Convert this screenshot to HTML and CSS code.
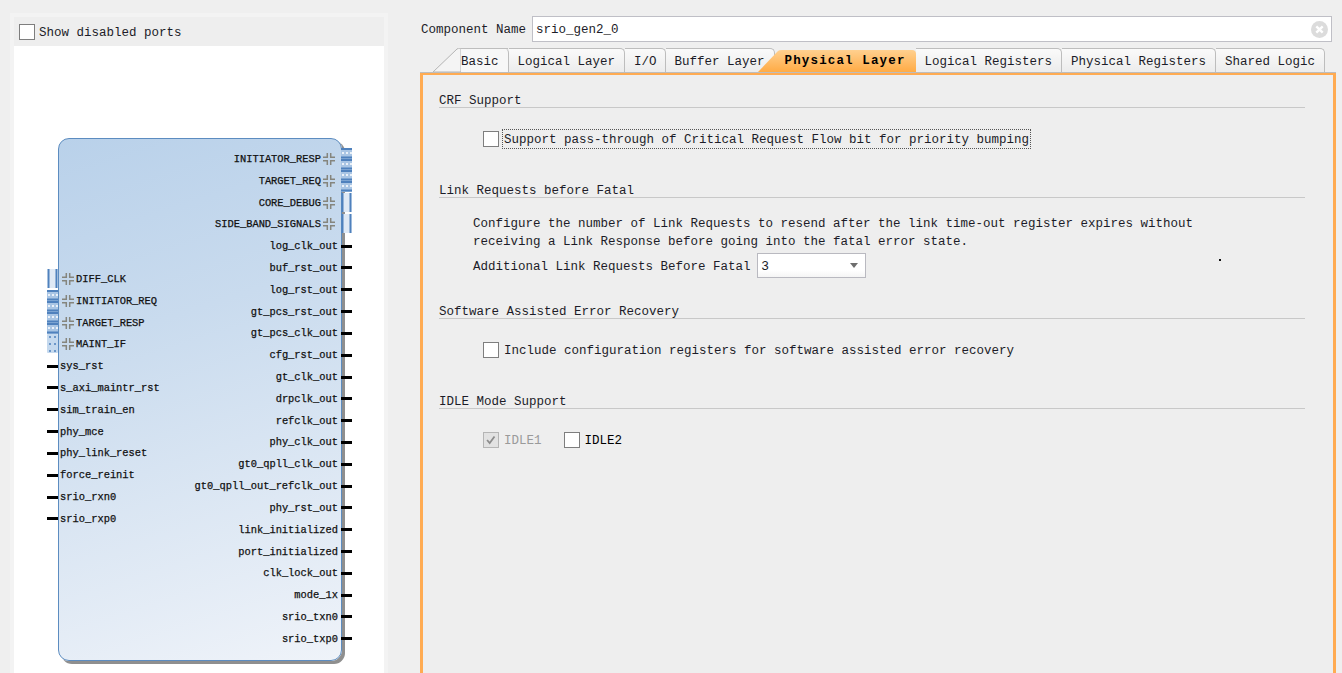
FILE: index.html
```html
<!DOCTYPE html>
<html lang="en">
<head>
<meta charset="utf-8">
<title>srio_gen2_0</title>
<link rel="stylesheet" href="styles.css">
</head>
<body>
<svg class="defs" width="0" height="0" aria-hidden="true">
  <defs>
    <symbol id="cross" viewBox="0 0 12 12">
      <path d="M4.300 0v4.300H0M7.700 0v4.300H12M4.300 12V7.700H0M7.700 12V7.700H12" fill="none" stroke="#85857d" stroke-width="1.500"/>
    </symbol>
    <symbol id="bus-h" viewBox="0 0 11 22">
      <rect width="11" height="22" fill="#a9c5e4"/>
      <path d="M0 1h11M0 9.500h11M0 12h11M0 20.500h11" stroke="#4f81bd" stroke-width="2"/>
      <path d="M1 5h2M5 5h2M9 5h2M1 16h2M5 16h2M9 16h2" stroke="#fff" stroke-width="1.400"/>
    </symbol>
    <symbol id="bus-v" viewBox="0 0 11 22">
      <rect x="1" y="1" width="9.500" height="19" fill="#dfe9f5"/>
      <path d="M1.500 1v19M9.500 1v19" stroke="#4f81bd" stroke-width="2"/>
    </symbol>
    <symbol id="bus-l" viewBox="0 0 11 22">
      <rect y="1" width="11" height="19" rx="1" fill="#c5d9ee"/>
      <path d="M2 4h2M7 4h2M2 11h2M7 11h2M2 18h2M7 18h2" stroke="#4f81bd" stroke-width="1.600"/>
    </symbol>
  </defs>
</svg>
<div class="app">
  <aside class="preview">
    <label class="preview-head"><span class="check"></span><span class="label-text">Show disabled ports</span></label>
    <div class="canvas">
      <div class="symbol">
        <div class="pins pins-left">
          <div class="pin"><svg class="bus"><use href="#bus-v"/></svg><svg class="cross"><use href="#cross"/></svg><span>DIFF_CLK</span></div>
          <div class="pin"><svg class="bus"><use href="#bus-h"/></svg><svg class="cross"><use href="#cross"/></svg><span>INITIATOR_REQ</span></div>
          <div class="pin"><svg class="bus"><use href="#bus-h"/></svg><svg class="cross"><use href="#cross"/></svg><span>TARGET_RESP</span></div>
          <div class="pin"><svg class="bus"><use href="#bus-l"/></svg><svg class="cross"><use href="#cross"/></svg><span>MAINT_IF</span></div>
          <div class="pin"><i class="stub"></i><span>sys_rst</span></div>
          <div class="pin"><i class="stub"></i><span>s_axi_maintr_rst</span></div>
          <div class="pin"><i class="stub"></i><span>sim_train_en</span></div>
          <div class="pin"><i class="stub"></i><span>phy_mce</span></div>
          <div class="pin"><i class="stub"></i><span>phy_link_reset</span></div>
          <div class="pin"><i class="stub"></i><span>force_reinit</span></div>
          <div class="pin"><i class="stub"></i><span>srio_rxn0</span></div>
          <div class="pin"><i class="stub"></i><span>srio_rxp0</span></div>
        </div>
        <div class="pins pins-right">
          <div class="pin"><span>INITIATOR_RESP</span><svg class="cross"><use href="#cross"/></svg><svg class="bus"><use href="#bus-h"/></svg></div>
          <div class="pin"><span>TARGET_REQ</span><svg class="cross"><use href="#cross"/></svg><svg class="bus"><use href="#bus-h"/></svg></div>
          <div class="pin"><span>CORE_DEBUG</span><svg class="cross"><use href="#cross"/></svg><svg class="bus"><use href="#bus-v"/></svg></div>
          <div class="pin"><span>SIDE_BAND_SIGNALS</span><svg class="cross"><use href="#cross"/></svg><svg class="bus"><use href="#bus-v"/></svg></div>
          <div class="pin"><span>log_clk_out</span><i class="stub"></i></div>
          <div class="pin"><span>buf_rst_out</span><i class="stub"></i></div>
          <div class="pin"><span>log_rst_out</span><i class="stub"></i></div>
          <div class="pin"><span>gt_pcs_rst_out</span><i class="stub"></i></div>
          <div class="pin"><span>gt_pcs_clk_out</span><i class="stub"></i></div>
          <div class="pin"><span>cfg_rst_out</span><i class="stub"></i></div>
          <div class="pin"><span>gt_clk_out</span><i class="stub"></i></div>
          <div class="pin"><span>drpclk_out</span><i class="stub"></i></div>
          <div class="pin"><span>refclk_out</span><i class="stub"></i></div>
          <div class="pin"><span>phy_clk_out</span><i class="stub"></i></div>
          <div class="pin"><span>gt0_qpll_clk_out</span><i class="stub"></i></div>
          <div class="pin"><span>gt0_qpll_out_refclk_out</span><i class="stub"></i></div>
          <div class="pin"><span>phy_rst_out</span><i class="stub"></i></div>
          <div class="pin"><span>link_initialized</span><i class="stub"></i></div>
          <div class="pin"><span>port_initialized</span><i class="stub"></i></div>
          <div class="pin"><span>clk_lock_out</span><i class="stub"></i></div>
          <div class="pin"><span>mode_1x</span><i class="stub"></i></div>
          <div class="pin"><span>srio_txn0</span><i class="stub"></i></div>
          <div class="pin"><span>srio_txp0</span><i class="stub"></i></div>
        </div>
      </div>
    </div>
  </aside>
  <main class="config">
    <div class="name-row">
      <span class="label-text">Component Name</span>
      <div class="name-input">
        <span class="label-text">srio_gen2_0</span>
        <svg class="clear" viewBox="0 0 16 16"><circle cx="8" cy="8" r="8" fill="#dcdcdc"/><path d="M5 5l6 6M11 5l-6 6" stroke="#fff" stroke-width="2.200"/></svg>
      </div>
    </div>
    <nav class="tabs">
      <div class="tab tab-first">
        <svg class="slant" viewBox="0 0 28 24" preserveAspectRatio="none"><path d="M0 24L24 1Q25 0 28 0V24Z" fill="#f4f4f4" stroke="#b4b4b4"/></svg>
        <span>Basic</span>
      </div>
      <div class="tab">Logical Layer</div>
      <div class="tab tab-io">I/O</div>
      <div class="tab tab-before-active">Buffer Layer</div>
      <div class="tab tab-active">
        <svg class="slant" viewBox="0 0 28 22" preserveAspectRatio="none"><defs><linearGradient id="orange" x1="0" y1="0" x2="0" y2="1"><stop offset="0" stop-color="#ffd08f"/><stop offset="1" stop-color="#ffab45"/></linearGradient></defs><path d="M0 22L20 1Q21 0 24 0H28V22Z" fill="url(#orange)"/></svg>
        <span>Physical Layer</span>
      </div>
      <div class="tab">Logical Registers</div>
      <div class="tab">Physical Registers</div>
      <div class="tab">Shared Logic</div>
    </nav>
    <div class="panel">
      <section class="group group-crf">
        <h2 class="group-title">CRF Support</h2>
        <div class="opt-row">
          <label class="opt"><span class="check"></span><span class="label-text focus">Support pass-through of Critical Request Flow bit for priority bumping</span></label>
        </div>
      </section>
      <section class="group group-link">
        <h2 class="group-title">Link Requests before Fatal</h2>
        <div class="desc">
          <p class="desc-line">Configure the number of Link Requests to resend after the link time-out register expires without</p>
          <p class="desc-line desc-clip">receiving a Link Response before going into the fatal error state.</p>
          <div class="combo-row">
            <span class="combo-label">Additional Link Requests Before Fatal</span>
            <div class="combo"><span class="combo-val">3</span><i class="combo-arrow"></i></div>
          </div>
        </div>
      </section>
      <section class="group group-soft">
        <h2 class="group-title">Software Assisted Error Recovery</h2>
        <div class="opt-row">
          <label class="opt"><span class="check"></span><span class="label-text">Include configuration registers for software assisted error recovery</span></label>
        </div>
      </section>
      <section class="group group-idle">
        <h2 class="group-title">IDLE Mode Support</h2>
        <div class="opt-row">
          <label class="opt opt-disabled"><span class="check check-on"><svg viewBox="0 0 16 16"><path d="M3.500 8l3 3.500 5.500-7.500" fill="none" stroke="#8c8c8c" stroke-width="2"/></svg></span><span class="label-text">IDLE1</span></label>
          <label class="opt opt-second"><span class="check"></span><span class="label-text">IDLE2</span></label>
        </div>
      </section>
      <i class="speck"></i>
    </div>
  </main>
</div>
</body>
</html>
```
FILE: styles.css
```css
* { box-sizing: border-box; }
html, body { margin: 0; height: 673px; overflow: hidden; }
body {
  background: #efefef;
  color: #1c1c28;
  font: 12.5px/16px "Liberation Mono", "DejaVu Sans Mono", monospace;
}
.defs { position: absolute; }
.app { display: flex; height: 673px; overflow: hidden; }
.label-text { display: block; line-height: 14px; padding-top: 2px; }

/* left: symbol preview */
.preview {
  width: 378px;
  height: 680px;
  margin: 13px 0 0 10px;
  border: 4px solid #f3f3f3;
  border-bottom: 0;
  flex: none;
  display: flex;
  flex-direction: column;
}
.preview-head {
  height: 29px;
  background: #eee;
  display: flex;
  align-items: center;
  gap: 4px;
  padding-left: 5px;
  flex: none;
}
.canvas { flex: 1; background: #fff; padding: 92px 0 0 44px; }
.symbol {
  width: 284px;
  height: 523px;
  border: 1.5px solid #5c8cc0;
  border-radius: 11px;
  background: linear-gradient(162deg, #b9d1ea 0%, #c9dbee 35%, #eff3f9 100%);
  box-shadow: 3px 3px 0 #8f8f8f;
  display: flex;
  justify-content: space-between;
  align-items: flex-start;
  color: #111;
  font-size: 10.4px;
  line-height: 12px;
  -webkit-text-stroke: 0.25px #111;
}
.pins { display: flex; flex-direction: column; }
.pins-left { padding-top: 129px; margin-left: -12px; }
.pins-right { padding-top: 9px; margin-right: -11px; align-items: flex-end; }
.pin { height: 21.82px; display: flex; align-items: center; white-space: nowrap; }
.stub { display: block; width: 11px; height: 3px; background: #000; flex: none; }
.pins-left .stub { margin-right: 2px; }
.pins-right .stub { margin-left: 3px; }
.bus { width: 11px; height: 22px; flex: none; }
.cross { width: 12px; height: 12px; flex: none; }
.pins-left .cross { margin: 0 2px 0 4px; }
.pins-right .cross { margin: 0 6px 0 2px; }

/* common check */
.check {
  display: block;
  width: 16px;
  height: 16px;
  flex: none;
  background: #fff;
  border: 1px solid #7e7e7e;
}
.check-on { background: #e2e2e2; border-color: #b5b5b5; }
.check-on svg { display: block; width: 14px; height: 14px; }

/* right: configuration */
.config {
  width: 916px;
  margin-left: 32px;
  flex: none;
  display: flex;
  flex-direction: column;
  height: 680px;
}
.name-row { display: flex; align-items: center; gap: 6px; margin-top: 16px; padding: 0 4px 0 1px; height: 26px; }
.name-input {
  flex: 1;
  height: 26px;
  background: #fff;
  border: 1px solid #bfbfc6;
  display: flex;
  align-items: center;
  justify-content: space-between;
  padding: 0 3px 0 3px;
}
.clear { width: 17px; height: 17px; }
.tabs { display: flex; height: 24px; margin: 6px 0 0 13px; align-items: stretch; }
.tab {
  position: relative;
  padding: 5px 9px 0;
  height: 24px;
  background: linear-gradient(#fafafa, #ececec);
  border: 1px solid #bdbdbd;
  border-bottom: 0;
  border-left: 0;
  border-radius: 0 5px 0 0;
  white-space: nowrap;
}
.tab-io { padding-right: 8px; }
.tab-first {
  padding: 6px 9px 0 28px;
  background: linear-gradient(90deg, transparent 26px, #f7f7f7 26px);
  border-top: 0;
}
.tab-first .slant { position: absolute; left: 0; top: 0; width: 28px; height: 24px; }
.tab-first span { position: relative; }
.tab-first::before {
  content: "";
  position: absolute;
  left: 26px;
  right: 0;
  top: 0;
  border-top: 1px solid #bdbdbd;
}
.tab-before-active { width: 109px; }
.tab-active {
  margin-left: -17px;
  margin-top: 2px;
  height: 22px;
  padding: 3px 10px 0 27px;
  border: 0;
  background: linear-gradient(#ffd08f, #ffab45) 27px 0 no-repeat;
  border-radius: 0 4px 0 0;
  font-weight: bold;
  letter-spacing: 1.14px;
  color: #000;
  z-index: 1;
}
.tab-active .slant { position: absolute; left: 0; top: 0; width: 28px; height: 22px; }
.tab-active span { position: relative; }
.panel {
  position: relative;
  flex: 1;
  border: 3px solid #ffab52;
  border-top-width: 2px;
  box-shadow: 0 -1px 0 #bdbdbd;
  margin-top: 1px;
  background: #eee;
  padding: 17px 28px 0 16px;
}
.group-title {
  margin: 0;
  font: inherit;
  height: 16px;
  border-bottom: 1px solid #c8c8c8;
  line-height: 19px;
}
.group { display: flex; flex-direction: column; }
.group-link { margin-top: 33px; }
.group-soft { margin-top: 25px; }
.group-idle { margin-top: 33px; }
.opt-row { display: flex; margin: 21px 0 0 44px; align-items: center; height: 20px; }
.opt { display: flex; align-items: center; gap: 5px; white-space: nowrap; }
.opt-second { margin-left: 22px; color: #000; }
.opt-disabled { color: #9a9a9a; }
.focus { outline: 1px dotted #555; outline-offset: 1px; }
.desc { padding: 17px 0 0 34px; }
.desc-line { margin: 0; height: 18px; line-height: 18px; overflow: hidden; }
.desc-clip { height: 15px; }
.combo-row { display: flex; align-items: center; gap: 6px; margin-top: 5px; height: 25px; }
.combo-label { display: block; padding-top: 3px; line-height: 14px; }
.combo {
  width: 109px;
  height: 25px;
  background: linear-gradient(#fff 70%, #f5f5f5);
  border: 1px solid #b9b9c0;
  display: flex;
  align-items: center;
  justify-content: space-between;
  padding: 0 7px 0 4px;
  font-family: "Liberation Sans", sans-serif;
  font-size: 13px;
}
.combo-arrow {
  width: 0;
  height: 0;
  border: 4.5px solid transparent;
  border-top: 5px solid #6e6e6e;
  border-bottom: 0;
}
.speck { position: absolute; left: 796px; top: 184px; width: 2px; height: 2px; background: #111; }
```
